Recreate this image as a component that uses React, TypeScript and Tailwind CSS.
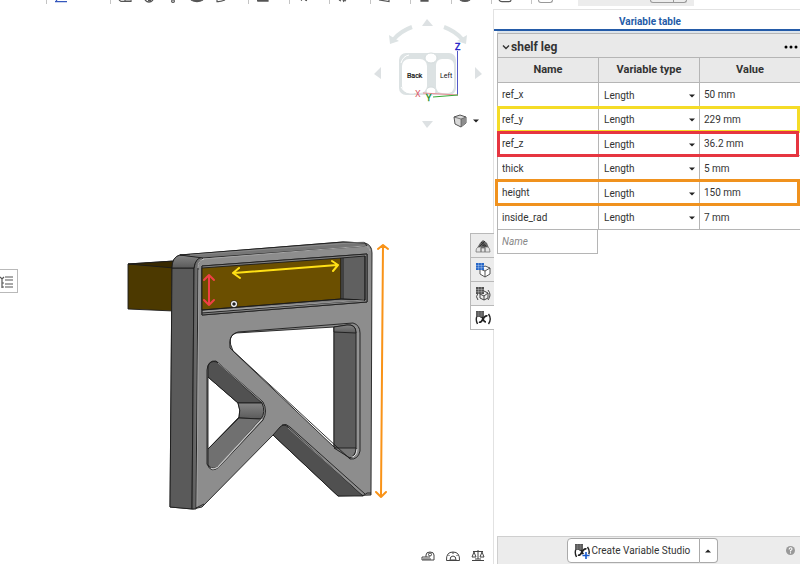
import React from 'react';

const variables = [
  { name: 'ref_x', value: '50 mm', mark: '' },
  { name: 'ref_y', value: '229 mm', mark: 'left-0 right-0 -top-px -bottom-px border-[#f5dc28]' },
  { name: 'ref_z', value: '36.2 mm', mark: 'left-0 right-px -top-px -bottom-px border-[#e63540]' },
  { name: 'thick', value: '5 mm', mark: '' },
  { name: 'height', value: '150 mm', mark: '-left-0.5 right-0 -top-0.5 -bottom-px border-[#f0921e]' },
  { name: 'inside_rad', value: '7 mm', mark: '' },
];

function Caret({ up = false }: { up?: boolean }) {
  return (
    <svg viewBox="0 0 6 4" className="pointer-events-none h-1 w-1.5 shrink-0" aria-hidden="true">
      <path d={up ? 'M0 3.5h6L3 .5z' : 'M0 .5h6L3 3.5z'} fill="#222" />
    </svg>
  );
}

function ToolIcon({ d, color = '#555', label }: { d: string; color?: string; label: string }) {
  return (
    <button type="button" aria-label={label} className="h-1.5 w-3.5 shrink-0">
      <svg viewBox="0 0 14 6" className="h-1.5 w-3.5">
        <path d={d} fill="none" stroke={color} strokeWidth="1.2" />
      </svg>
    </button>
  );
}

const singleTools = [
  { label: 'Mirror', d: 'M3 0v1.2h10V0M2 .6h11' },
  { label: 'Linear pattern', d: 'M5 0l1 .5M9 0l2 .6' },
  { label: 'Trim', d: 'M3 0l2 1M7 0l1 2M8 0l2 1' },
  { label: 'Dimension', d: 'M2 0l10 1.5V0' },
  { label: 'Constraint', d: 'M4 0v1.2h7V0M4 .6h7' },
  { label: 'Plane', d: 'M2 0q5 3 10 0M4 .3h6' },
];

function Toolbar() {
  return (
    <nav aria-label="Features" className="flex h-[9px] shrink-0 items-start overflow-hidden">
      <div className="w-[46px]" />
      <div className="flex h-1 w-16 border-l border-[#c4c4c4] pl-[7px]">
        <ToolIcon label="Sketch" color="#3558bd" d="M1 1.6h12M2 1l1-1" />
      </div>
      <div className="flex h-1 w-[138px] justify-between border-l border-[#c4c4c4] pr-5 pl-[7px]">
        <ToolIcon label="Extrude" d="M1 0l2 1.4h10V0M7 0v1h5" />
        <ToolIcon label="Revolve" d="M3 0q4 4 8 0M6 .5h3" />
        <ToolIcon label="Sweep" d="M6 0q-1 2.4 1 2.4T8 0z" />
        <ToolIcon label="Loft" d="M1 0q6 3.4 12 0M3 .4h8" />
        <ToolIcon label="Thicken" d="M3 0v1.6q3 .4 8-1.6" />
      </div>
      <div className="flex">
        {singleTools.map((tool) => (
          <div key={tool.label} className="flex h-1 border-l border-[#c4c4c4] pl-1.5 odd:w-[41px] even:w-10">
            <ToolIcon label={tool.label} d={tool.d} />
          </div>
        ))}
      </div>
      <div className="flex h-1 w-10 border-l border-[#c4c4c4] pl-1.5">
        <ToolIcon label="Frame" d="M1 0q1 1.6 3 1.6h7q2 0 2-1.6" />
      </div>
      <div className="h-1 border-l border-[#c4c4c4] pl-1.5">
        <div className="h-[3px] w-[15px] rounded-b-sm border border-t-0 border-[#999]" />
      </div>
      <div className="ml-[25px] flex h-1.5 w-[116px] justify-end bg-[#ececec] pr-[7px]">
        <div className="h-[3px] w-6 rounded-bl-sm border border-t-0 border-[#999]" />
        <div className="h-[3px] w-[13px] rounded-br-sm border border-t-0 border-l-0 border-[#999]" />
      </div>
    </nav>
  );
}

function ViewCube() {
  return (
    <svg viewBox="370 18 114 112" className="absolute top-[9px] right-[9px] h-28 w-[114px]" aria-label="View cube">
      <g fill="#dde1e3">
        <path d="M427 19l6 7h-11zM427 128l6-7h-11zM374 74l7-7v12zM482 74l-7-7v12z" />
      </g>
      <path d="M394 39q7-8 18-12M462 39q-7-8-18-12" fill="none" stroke="#dde3e4" strokeWidth="4" />
      <path d="M389 35l1 9 9-3zM467 35l-1 9-9-3z" fill="#dde3e4" />
      <rect x="399" y="53" width="57" height="42" rx="7" fill="#dce2e3" />
      <path d="M401 63q2-7 8-8M401 87q4 7 13 6" fill="none" stroke="#fff" />
      <rect x="402" y="59" width="25" height="34" rx="7" fill="#fff" />
      <rect x="436" y="59" width="18" height="34" rx="6" fill="#fff" />
      <ellipse cx="431" cy="58" rx="6" ry="5" fill="#fff" stroke="#d5dcdd" />
      <ellipse cx="431" cy="91" rx="5" ry="4" fill="#fff" stroke="#d5dcdd" />
      <path d="M457.500 51v44" stroke="#5358c8" />
      <path d="M423 93l35 2" stroke="#ea8b94" />
      <path d="M433 97l25-2" stroke="#35a935" />
      <g fontFamily="Roboto, sans-serif" fontSize="9">
        <text x="407" y="78" fontSize="7" fill="#111" stroke="#111" strokeWidth="0.200">Back</text>
        <text x="440" y="78" fontSize="7" fill="#111">Left</text>
        <text x="455" y="50" fill="#2525c8" stroke="#2525c8" strokeWidth="0.400">Z</text>
        <text x="415" y="97" fill="#dc5d69">X</text>
        <text x="426" y="101" fill="#168d20" stroke="#168d20" strokeWidth="0.300">Y</text>
      </g>
    </svg>
  );
}

function ShelfLeg() {
  return (
    <svg viewBox="120 235 280 280" className="absolute top-[226px] left-[120px] size-[280px]" aria-label="Shelf leg model">
      <defs>
        <linearGradient id="fillet" x1="0" x2="1">
          <stop offset="0" stopColor="#5b5b5b" />
          <stop offset="1" stopColor="#878787" />
        </linearGradient>
        <linearGradient id="bend" x1="0" x2="0" y1="0" y2="1">
          <stop offset="0" stopColor="#858585" />
          <stop offset="1" stopColor="#5a5a5a" />
        </linearGradient>
      </defs>
      <g stroke="#1c1c1c" strokeWidth="0.900" strokeLinejoin="round">
        <path d="M128 264l46-3v50l-46-2z" fill="#4c3900" />
        <path d="M128 264l46-3v7z" fill="#382900" />
        <path
          fillRule="evenodd"
          d="M170 507L172 268Q172 257 180 255L343 242L365 243Q372 245 372 253L371 495L338 496L273 435L202 507L193 509ZM202 266V315L367 302V254ZM208 377L238 403Q241 410 239 417L208 449ZM236 333L334 327V447L233 351Q226 336 236 333Z"
          fill="#8d8d8d"
        />
        <path d="M170 507L172 268H194L192 509Z" fill="#5a5a5a" />
        <path d="M192 509L194 268Q195 258 202 257L204 258Q198 260 198 269L196 509Z" fill="url(#fillet)" />
        <path d="M172 268Q172 257 180 255L203 257Q195 258 194 268Z" fill="url(#bend)" />
        <path d="M180 255L343 242L365 243L367 246L203 258Z" fill="#767676" />
      </g>
      <path d="M203 259L364 246Q369 246 370 251" fill="none" stroke="#a5a5a5" />
      <path d="M198 268Q198 260 204 259" fill="none" stroke="#c4c4c4" />
      <path d="M199 270L197 507" stroke="#a0a0a0" />
      <path d="M190 255L364 242" stroke="#999" strokeWidth="0.600" />
      <g stroke="#1c1c1c" strokeWidth="0.900" strokeLinejoin="round">
        <path d="M202 266L367 254V302L202 315Z" fill="#838383" />
        <path d="M202 268L341 258V299L202 310Z" fill="#6b4f00" />
        <path d="M341 258L365 256V300L341 299Z" fill="#606060" />
        <path d="M343 258V299M202 310L341 299L365 300L202 313" fill="none" />
        <path d="M365 256V300" fill="none" />
        <path d="M334 327L347 325Q356 324 356 333V448Q356 456 350 458L334 447Z" fill="#5b5b5b" />
        <path d="M334 327L347 325Q356 324 356 333L334 332Z" fill="url(#bend)" />
        <path d="M334 448H356Q356 455 350 458Z" fill="#777" />
        <path d="M353 323Q360 325 360 333V451Q358 460 350 459L230 348Q228 334 238 332Z" fill="none" />
        <path d="M208 366Q210 360 217 362L262 403H238L208 377Z" fill="#515151" />
        <path d="M238 403H262Q266 412 261 419L239 418Q241 410 238 403Z" fill="url(#bend)" />
        <path d="M239 418L261 419L219 466Q213 471 208 465V449Z" fill="#707070" />
        <path d="M207 370Q208 360 216 361L263 402Q268 411 263 420L219 467Q211 474 207 464Z" fill="none" />
        <path d="M273 435L280 427Q284 423 288 427L363 496L338 496Z" fill="#505050" />
        <path d="M282 425Q286 423 290 427L365 494" fill="none" />
        <path d="M196 508L204 504M363 496L367 493L371 493" fill="none" />
      </g>
      <path d="M262 419L218 467Q213 470 211 468" fill="none" stroke="#c7c7c7" strokeWidth="1.200" />
      <path d="M218 363L261 401" stroke="#8b8b8b" />
      <path d="M358 333V449Q357 456 351 457" fill="none" stroke="#999" />
      <path d="M353 457Q357 455 357 449" fill="none" stroke="#ddd" />
      <path d="M288 428L362 494" stroke="#8d8d8d" />
      <path d="M203 311.500L364 300" stroke="#aaa" strokeWidth="0.800" />
      <g fill="none" strokeWidth="2" strokeLinecap="round" strokeLinejoin="round">
        <path d="M209 275V305M204 280L209 275L214 280M204 300L209 305L214 300" stroke="#f04047" />
        <path d="M234 273L337 265M239 268L233 273L240 278M332 261L338 265L333 271" stroke="#ffe015" />
        <path d="M383 245L381 497M378 249L383 245L388 249M376 492L381 497L386 492" stroke="#f99318" />
      </g>
      <circle cx="234" cy="304" r="2.500" fill="#222" stroke="#fff" strokeWidth="1.500" />
      <circle cx="234" cy="304" r="3.500" fill="none" stroke="#111" strokeWidth="0.600" />
    </svg>
  );
}

function Grid({ color }: { color: string }) {
  return (
    <>
      <path d="M1 1h8v7H1z" fill={color} />
      <path d="M1 3.500h8M1 5.700h8M3.600 1v7M6.300 1v7" stroke="#fff" strokeWidth="0.300" />
    </>
  );
}

function VariableGlyph({ plus = false }: { plus?: boolean }) {
  return (
    <svg viewBox="0 0 16 16" className="size-4 shrink-0" aria-hidden="true">
      <path d="M2.500 5Q0 9 2.500 14M13.500 4Q17 9 13.500 14" fill="none" stroke="#222" strokeWidth="1.400" />
      <path d="M5 7Q7 6 8 9T11 12M12.500 6Q10 5 8 9T4 12" fill="none" stroke="#222" strokeWidth="1.700" />
      <path d="M1 1h8v6H1z" fill="#555" />
      <path d="M1 3h8M1 5h8M3.600 1v6M6.300 1v6" stroke="#aaa" strokeWidth="0.300" />
      {plus && <path d="M12 9v7M8.500 12.500h7" stroke="#fff" strokeWidth="3" />}
      {plus && <path d="M12 9v7M8.500 12.500h7" stroke="#1759cb" strokeWidth="1.600" />}
    </svg>
  );
}

function SideTabs() {
  const tab = 'flex h-6 w-[23px] items-center justify-center border-b border-[#b9b9b9]';
  return (
    <div className="absolute top-[224px] -right-px border-t border-l border-[#b9b9b9] bg-[#ececec]">
      <button type="button" aria-label="Appearance" className={tab}>
        <svg viewBox="0 0 16 16" className="size-4">
          <path d="M5 5l3-3 4 3 2 5H2z" fill="#666" />
          <path d="M6 4l5 4M10 3L4 9M7 7l5 2" stroke="#333" />
          <path d="M1 14q0-5 3-5h2v5zM6 10h4v4H6zM10 9h3q2 1 2 5h-5z" fill="#e4e4e4" stroke="#777" strokeWidth="0.800" />
        </svg>
      </button>
      <button type="button" aria-label="Configuration" className={tab}>
        <svg viewBox="0 0 16 16" className="size-4">
          <path d="M5 7l5-3 5 2v6l-5 3-5-3zM5 7l5 2 5-3M10 9v6" fill="#fff" stroke="#444" strokeWidth="0.900" />
          <Grid color="#2767c7" />
        </svg>
      </button>
      <button type="button" aria-label="Custom table" className={tab}>
        <svg viewBox="0 0 16 16" className="size-4">
          <path d="M5 8l4-3 4 2v5l-4 2-4-2zM5 8l4 2 4-3M9 10v4M3 7Q0 11 3 14M13 4Q17 9 13 14" fill="none" stroke="#444" />
          <Grid color="#505050" />
        </svg>
      </button>
      <button type="button" aria-label="Variable table" className={`${tab} bg-white`}>
        <VariableGlyph />
      </button>
    </div>
  );
}

function Viewport() {
  return (
    <main className="relative min-w-0 flex-1 bg-white">
      <ViewCube />
      <button type="button" aria-label="Display style" className="absolute top-[104px] right-3.5 flex items-center gap-1.5">
        <svg viewBox="0 0 14 16" className="h-4 w-3.5">
          <path d="M1 4l6-2 6 2v6l-5 4-6-3z" fill="#d8d8d8" stroke="#555" />
          <path d="M8 6l5-2v6l-5 4z" fill="#8d8d8d" />
          <path d="M1 4l7 2 5-2M8 6v8" fill="none" stroke="#555" strokeWidth="0.700" />
        </svg>
        <Caret />
      </button>
      <ShelfLeg />
      <button type="button" aria-label="Feature list" className="absolute top-[260px] left-0 h-6 w-[18px] border border-l-0 border-[#b9b9b9]">
        <svg viewBox="0 0 17 22" className="h-[22px] w-[17px]">
          <path d="M0 7l2 2 2-2M2 9v9M2 13h2M2 17h2M5 7h8M5 10h8M5 14h8M5 17h8" fill="none" stroke="#555" strokeWidth="1.200" />
        </svg>
      </button>
      <SideTabs />
      <div className="absolute right-2 bottom-0 flex gap-[11px]">
        <button type="button" aria-label="Measure">
          <svg viewBox="0 0 14 16" className="h-4 w-3.5" fill="none" stroke="#444">
            <path d="M5 9V7q0-3 4-3t4 3v5H1V9h8M3 10v2M5 10v2M7 10v2M9 10v2" />
            <circle cx="9" cy="6.500" r="1.500" />
          </svg>
        </button>
        <button type="button" aria-label="Angle">
          <svg viewBox="0 0 14 16" className="h-4 w-3.5" fill="none" stroke="#444">
            <path d="M.500 12.500Q0 4 7 4t6.500 8.500zM4 12q0-4 3-4t3 4zM2.500 7l1 1M7 4v2M11.500 7l-1 1" />
          </svg>
        </button>
        <button type="button" aria-label="Mass properties">
          <svg viewBox="0 0 14 16" className="h-4 w-3.5" fill="none" stroke="#444">
            <path d="M2 3.500h10M7 2v9M3 4L1 9h4L3 4M11 4L9 9h4l-2-5M1 12.500h12M4 11h6" />
          </svg>
        </button>
      </div>
    </main>
  );
}

function VariableTable() {
  const head = 'border-b border-l border-[#b5b5b5] p-0 text-center text-[11px] font-bold';
  const cell = 'border-b border-l border-[#b5b5b5] p-0';
  return (
    <table className="w-full table-fixed border-separate border-spacing-0">
      <thead>
        <tr className="h-[25px] bg-[#e9e9e9]">
          <th className={head}>Name</th>
          <th className={head}>Variable type</th>
          <th className={head}>Value</th>
        </tr>
      </thead>
      <tbody>
        {variables.map((row) => (
          <tr key={row.name} className="relative odd:h-6 even:h-[25px]">
            <td className={cell}>
              <input aria-label="Name" defaultValue={row.name} className="block h-5 w-full bg-transparent px-1 outline-none" />
              {row.mark && <span className={`pointer-events-none absolute z-10 border-3 ${row.mark}`} />}
            </td>
            <td className={cell}>
              <div className="flex h-[22px] items-center pt-0.5 pr-1">
                <select aria-label={`Type of ${row.name}`} className="h-5 w-full appearance-none bg-transparent pl-[5px] outline-none">
                  <option>Length</option>
                </select>
                <Caret />
              </div>
            </td>
            <td className={cell}>
              <input aria-label={`Value of ${row.name}`} defaultValue={row.value} className="block h-5 w-full bg-transparent px-1 outline-none" />
            </td>
          </tr>
        ))}
        <tr className="h-6">
          <td className={`${cell} border-r`}>
            <input aria-label="New variable name" placeholder="Name" className="block h-5 w-full bg-transparent px-1 italic outline-none placeholder:text-[#888]" />
          </td>
        </tr>
      </tbody>
    </table>
  );
}

export default function App() {
  return (
    <div className="flex h-screen flex-col overflow-hidden bg-white font-['Roboto','Liberation_Sans',sans-serif] text-[10px] leading-4 text-[#333]">
      <Toolbar />
      <div className="flex min-h-0 flex-1">
        <Viewport />
        <aside className="flex w-[307px] shrink-0 flex-col border-t border-l border-[#e2e2e2] pl-[3px]">
          <h2 className="-ml-[3px] h-[21px] border-b-2 border-[#245ba8] pt-1 pl-1.5 text-center font-bold text-[#245ba8]">Variable table</h2>
          <section className="flex min-h-0 flex-1 flex-col border-t-2 border-[#dce4ec]">
            <div className="flex h-[25px] items-center border-t border-b border-l border-[#b5b5b5] bg-[#e9e9e9] pt-0.5 pr-0.5 pl-1">
              <button type="button" className="flex items-center gap-px text-xs font-bold">
                <svg viewBox="0 0 8 8" className="size-2" aria-hidden="true">
                  <path d="M1 2.500l3 3 3-3" fill="none" stroke="#333" strokeWidth="1.400" />
                </svg>
                shelf leg
              </button>
              <button type="button" aria-label="More" className="ml-auto">
                <svg viewBox="0 0 14 4" className="h-1 w-3.5">
                  <circle cx="2" cy="2" r="1.500" />
                  <circle cx="7" cy="2" r="1.500" />
                  <circle cx="12" cy="2" r="1.500" />
                </svg>
              </button>
            </div>
            <VariableTable />
          </section>
          <footer className="flex h-7 items-center border-t border-l border-[#cfcfcf] bg-[#ececec] pr-[5px]">
            <div className="flex flex-1 justify-center">
              <button type="button" className="flex h-[25px] w-[133px] items-center gap-0.5 rounded-l border border-[#aaa] bg-white pl-1.5 whitespace-nowrap">
                <VariableGlyph plus />
                Create Variable Studio
              </button>
              <button type="button" aria-label="More options" className="flex h-[25px] w-[18px] items-center justify-center rounded-r border border-l-0 border-[#aaa] bg-white">
                <Caret up />
              </button>
            </div>
            <button type="button" aria-label="Help" className="flex size-[9px] items-center justify-center rounded-full bg-[#999]">
              <svg viewBox="0 0 10 10" className="size-[9px]">
                <path d="M3.500 4q0-2 1.600-2t1.500 1.600Q6.500 4.500 5 5v1.200M5 7v1.200" fill="none" stroke="#fff" strokeWidth="1.200" />
              </svg>
            </button>
          </footer>
        </aside>
      </div>
    </div>
  );
}
